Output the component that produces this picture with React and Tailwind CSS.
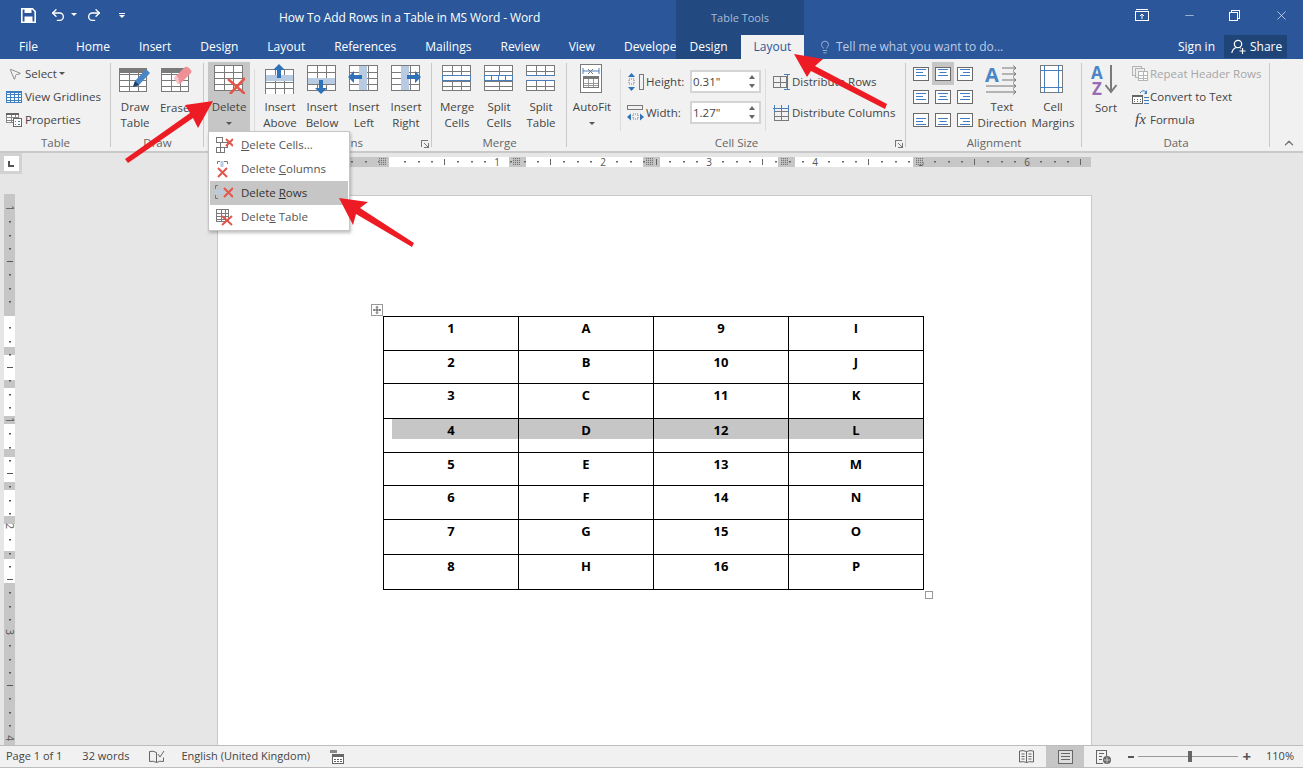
import React from 'react';
import { Undo2, Redo2, Lightbulb, X, Minus, MousePointer2, ChevronUp } from 'lucide-react';

const G = '#7a7a7a';
const B = '#4a7ebb';
const L = '#b9cbe3';
const R = '#e2574c';

const Grid = ({ x = 0.5, y = 0.5, w = 28, h = 24, rows = 4, cols = 4, c = G }) => (
  <g stroke={c} fill="none" shapeRendering="crispEdges">
    <rect x={x} y={y} width={w} height={h} fill="#fff" />
    {Array.from({ length: rows - 1 }, (_, i) => (
      <line key={'r' + i} x1={x} x2={x + w} y1={Math.round(y + (h * (i + 1)) / rows) + 0.5} y2={Math.round(y + (h * (i + 1)) / rows) + 0.5} />
    ))}
    {Array.from({ length: cols - 1 }, (_, i) => (
      <line key={'c' + i} y1={y} y2={y + h} x1={Math.round(x + (w * (i + 1)) / cols) + 0.5} x2={Math.round(x + (w * (i + 1)) / cols) + 0.5} />
    ))}
  </g>
);

const DrawIco = () => (
  <svg width="32" height="30" className="block">
    <Grid y={4.5} w={27} h={23} rows={4} cols={3} />
    <rect x="0" y="4" width="28" height="5" fill="#7a7a7a" />
    <path d="M14 23l2-6L27 5l4 4-11 12z" fill="#4a86c5" />
    <path d="M14 23l2-6 4 4z" fill="#1f3f66" />
  </svg>
);
const EraserIco = () => (
  <svg width="32" height="30" className="block">
    <Grid y={4.5} w={27} h={23} rows={4} cols={3} />
    <rect x="0" y="4" width="28" height="5" fill="#7a7a7a" />
    <path d="M13 14L24 3q2-1 4 1l2 2q1 2 0 3L19 20h-2z" fill="#ef8f96" />
    <path d="M13 14l4 6h2l-2-7-2-1z" fill="#f7c3c6" />
  </svg>
);
const DeleteIco = () => (
  <svg width="32" height="30" className="block">
    <Grid x={1.5} y={1.5} w={28} h={25} rows={4} cols={3} />
    <path d="M15 15l17 15M32 14L17 30" stroke={R} strokeWidth="2.6" fill="none" />
  </svg>
);
const InsAbove = () => (
  <svg width="32" height="30" className="block">
    <Grid x={1.5} y={5.5} w={28} h={25} rows={4} cols={3} />
    <rect x="2" y="11" width="27" height="6" fill={L} />
    <path d="M15 0l-6 6h4v8h4V6h4z" fill="#2f72b7" />
  </svg>
);
const InsBelow = () => (
  <svg width="32" height="30" className="block">
    <Grid x={1.5} y={1.5} w={28} h={25} rows={4} cols={3} />
    <rect x="2" y="14" width="27" height="6" fill={L} />
    <path d="M15 30l-6-6h4v-8h4v8h4z" fill="#2f72b7" />
  </svg>
);
const InsLeft = () => (
  <svg width="32" height="30" className="block">
    <Grid x={1.5} y={1.5} w={28} h={25} rows={4} cols={3} />
    <rect x="11" y="2" width="8" height="24" fill={L} />
    <path d="M0 13l6-6v4h8v4H6v4z" fill="#2f72b7" />
  </svg>
);
const InsRight = () => (
  <svg width="32" height="30" className="block">
    <Grid x={1.5} y={1.5} w={28} h={25} rows={4} cols={3} />
    <rect x="11" y="2" width="8" height="24" fill={L} />
    <path d="M31 13l-6-6v4h-8v4h8v4z" fill="#2f72b7" />
  </svg>
);
const MergeIco = () => (
  <svg width="30" height="28" className="block">
    <Grid x={0.5} y={1.5} w={28} h={25} rows={5} cols={3} />
    <rect x="0.5" y="11.5" width="28" height="5" fill="#fff" stroke={B} shapeRendering="crispEdges" />
  </svg>
);
const SplitCells = () => (
  <svg width="30" height="28" className="block">
    <Grid x={0.5} y={1.5} w={28} h={25} rows={5} cols={2} />
    <rect x="0.5" y="11.5" width="28" height="5" fill="#fff" stroke={B} shapeRendering="crispEdges" />
    <path d="M7.5 12v4M14.5 12v4M21.5 12v4" stroke={B} shapeRendering="crispEdges" />
  </svg>
);
const SplitTable = () => (
  <svg width="30" height="28" className="block">
    <Grid x={0.5} y={1.5} w={28} h={10} rows={2} cols={3} />
    <Grid x={0.5} y={16.5} w={28} h={10} rows={2} cols={3} />
    <path d="M0 11.5h29M0 16.5h29" stroke={B} shapeRendering="crispEdges" />
  </svg>
);
const AutoFitIco = () => (
  <svg width="24" height="30" className="block">
    <rect x="0.5" y="0.5" width="21" height="28" fill="#fff" stroke={G} shapeRendering="crispEdges" />
    <path d="M3 7h16M3 4v6M19 4v6" stroke={B} fill="none" />
    <path d="M8 5l5 5M13 5l-5 5" stroke="#777" />
    <rect x="3.5" y="12.5" width="15" height="11" fill="#fff" stroke="#777" shapeRendering="crispEdges" />
    <rect x="3" y="12" width="16" height="3" fill="#777" />
    <path d="M4 19h14M4 21.5h14M8.5 15v8M13.5 15v8" stroke="#999" shapeRendering="crispEdges" />
  </svg>
);
const HeightIco = () => (
  <svg width="17" height="18" className="block">
    <rect x="12.5" y="1.5" width="4" height="15" fill="none" stroke={G} shapeRendering="crispEdges" />
    <path d="M4.5 0L1 4h7zM4.5 18L1 14h7z" fill="#2f72b7" />
    <rect x="2" y="6" width="5" height="5" fill="none" stroke={G} strokeDasharray="1 1" />
  </svg>
);
const WidthIco = () => (
  <svg width="17" height="18" className="block">
    <rect x="0.5" y="1.5" width="15" height="4" fill="none" stroke={G} shapeRendering="crispEdges" />
    <path d="M0 13l4-3.5v7zM17 13l-4-3.5v7z" fill="#2f72b7" />
    <rect x="6" y="10" width="5" height="5" fill="none" stroke={G} strokeDasharray="1 1" />
  </svg>
);
const DistRows = () => (
  <svg width="17" height="16" className="block">
    <rect x="0.5" y="2.5" width="13" height="11" fill="none" stroke={G} shapeRendering="crispEdges" />
    <path d="M7.5 3v10M1 8.5h13" stroke={G} shapeRendering="crispEdges" />
    <path d="M11 0.5h6M11 15.5h6M14.5 0v16" stroke={B} shapeRendering="crispEdges" />
  </svg>
);
const DistCols = () => (
  <svg width="17" height="16" className="block">
    <rect x="1.5" y="6.5" width="14" height="9" fill="none" stroke={G} shapeRendering="crispEdges" />
    <path d="M8.5 7v8M2 11.5h13" stroke={G} shapeRendering="crispEdges" />
    <path d="M0 3.5h16M1.5 0v7M8.5 0v7M15.5 0v7" stroke={B} shapeRendering="crispEdges" />
  </svg>
);
const AlignIco = ({ a, v }) => {
  const ys = v === 0 ? [2, 5, 8] : v === 1 ? [3, 6, 9] : [5, 8, 11];
  const rows = [10, 7, 10];
  return (
    <svg width="16" height="14" className="block">
      <rect x="0.5" y="0.5" width="15" height="13" fill="#fff" stroke="#6a6a6a" shapeRendering="crispEdges" />
      {ys.map((y, i) => {
        const w = rows[i];
        const x = a === 0 ? 3 : a === 1 ? 8 - w / 2 : 13 - w;
        return <rect key={i} x={x} y={y} width={w} height="1" fill="#3f7fc1" />;
      })}
    </svg>
  );
};
const TextDir = () => (
  <svg width="34" height="34" className="block">
    <text x="0" y="18" fontFamily="Open Sans" fontWeight="700" fontSize="20" fill="#4a86c5">A</text>
    <g stroke="#777" fill="none">
      <path d="M17 4h14M28 1.5l3 2.5-3 2.5M17 10h14M28 7.5l3 2.5-3 2.5M17 16h14M28 13.5l3 2.5-3 2.5M1 22h30M28 19.5l3 2.5-3 2.5M1 28h30M28 25.5l3 2.5-3 2.5" />
    </g>
  </svg>
);
const CellMargins = () => (
  <svg width="26" height="30" className="block">
    <rect x="0.5" y="1.5" width="22" height="27" fill="#fff" stroke={G} shapeRendering="crispEdges" />
    <path d="M0 6.5h23M0 23.5h23M4.5 1v28M18.5 1v28" stroke={B} shapeRendering="crispEdges" />
  </svg>
);
const SortIco = () => (
  <svg width="30" height="32" className="block">
    <text x="0" y="15" fontFamily="Open Sans" fontWeight="700" fontSize="17" fill="#4a86c5">A</text>
    <text x="1" y="31" fontFamily="Open Sans" fontWeight="700" fontSize="17" fill="#9a6bb5">Z</text>
    <path d="M20 1v26M14.5 21l5.5 7 5.5-7" stroke="#7a7a7a" strokeWidth="2" fill="none" />
  </svg>
);
const SelectIco = () => <MousePointer2 size={14} strokeWidth={1.2} color="#666" />;
const GridlinesIco = () => (
  <svg width="17" height="14" className="block">
    <Grid x={0.5} y={1.5} w={15} h={11} rows={4} cols={4} c="#3f7fc1" />
    <rect x="0" y="1" width="16" height="2" fill="#3f7fc1" />
  </svg>
);
const PropsIco = () => (
  <svg width="17" height="15" className="block">
    <Grid x={0.5} y={1.5} w={12} h={9} rows={3} cols={3} c="#888" />
    <rect x="0" y="1" width="13" height="2" fill="#666" />
    <rect x="7.5" y="6.5" width="8" height="8" fill="#fff" stroke="#666" shapeRendering="crispEdges" />
    <path d="M9 9h1M12 9h2M9 12h1M12 12h2" stroke="#4a7ebb" shapeRendering="crispEdges" />
  </svg>
);
const RepeatIco = () => (
  <svg width="17" height="16" className="block">
    <rect x="0.5" y="0.5" width="9" height="9" fill="#eee" stroke="#b5b5b5" shapeRendering="crispEdges" />
    <rect x="3.5" y="2.5" width="9" height="9" fill="#eee" stroke="#b5b5b5" shapeRendering="crispEdges" />
    <Grid x={6.5} y={5.5} w={9} h={9} rows={3} cols={2} c="#b5b5b5" />
  </svg>
);
const ConvertIco = () => (
  <svg width="17" height="16" className="block">
    <path d="M8 4q3-4 6-1" stroke="#3f7fc1" fill="none" />
    <path d="M15 1v4h-3z" fill="#3f7fc1" />
    <rect x="0.5" y="6.5" width="10" height="8" fill="#fff" stroke="#666" shapeRendering="crispEdges" />
    <rect x="0" y="6" width="11" height="2" fill="#666" />
    <path d="M2 10.5h1M5 10.5h1M8 10.5h1M2 12.5h1M5 12.5h1M8 12.5h1" stroke="#666" shapeRendering="crispEdges" />
    <path d="M12 8.5h5M12 11.5h5M12 14.5h5" stroke="#3f7fc1" shapeRendering="crispEdges" />
  </svg>
);

const Small = ({ icon, children, muted, w = 'w-[19px]' }) => (
  <div className={`h-[23px] flex items-center whitespace-nowrap ${muted ? 'text-[#a6a6a6]' : ''}`}>
    <span className={`${w} flex justify-center shrink-0`}>{icon}</span>
    {children}
  </div>
);

const Caret = () => <span className="block w-0 h-0 border-x-[3px] border-x-transparent border-t-[3px] border-t-[#555]" />;

const Big = ({ w = 'w-[42px]', icon, l1, l2, caret, active }) => (
  <div className={`${w} mt-[3px] h-[69px] pt-[2px] flex flex-col items-center shrink-0 ${active ? 'bg-[#c6c6c6]' : ''}`}>
    <div className="h-[36px] flex items-start justify-center">{icon}</div>
    <div className="h-[16px] leading-[16px] whitespace-nowrap">{l1}</div>
    {l2 && <div className="h-[16px] leading-[16px] whitespace-nowrap">{l2}</div>}
    {caret && <div className="h-[16px] flex items-center"><Caret /></div>}
  </div>
);

const Launcher = () => (
  <svg width="8" height="8" className="absolute right-[3px] bottom-[3px]">
    <path d="M0.5 7V0.5H7M7.5 3v4.5H3M3 3l4 4" stroke="#777" fill="none" shapeRendering="crispEdges" />
  </svg>
);

const Group = ({ w, label, children, launcher, hideLabel }) => (
  <section className={`${w} shrink-0 h-full relative flex flex-col`}>
    <div className="h-[76px] flex">{children}</div>
    <div className="h-[16px] leading-[16px] text-center text-[#666]">{label}</div>
    {launcher && <Launcher />}
    <span className="absolute right-0 top-[4px] bottom-[4px] w-px bg-[#c9c9c9]" />
  </section>
);

const VSep = () => <span className="w-px h-[62px] mt-[10px] bg-[#dcdcdc] shrink-0" />;

const SpinField = ({ value }) => (
  <div className="w-[71px] h-[23px] border-2 border-[#d4d4d4] bg-white flex items-center justify-between pl-[1px] pr-[4px] ml-auto">
    <span className="leading-none">{value}</span>
    <span className="flex flex-col gap-[5px]">
      <span className="block w-0 h-0 border-x-[3px] border-x-transparent border-b-[4px] border-b-[#666]" />
      <span className="block w-0 h-0 border-x-[3px] border-x-transparent border-t-[4px] border-t-[#666]" />
    </span>
  </div>
);

const Tab = ({ ml, children }) => <span className={`${ml} whitespace-nowrap`}>{children}</span>;

const TitleBar = () => (
  <header className="h-[35px] bg-[#2b579a] flex text-white relative">
    <div className="w-[676px] flex items-start shrink-0">
      <svg width="15" height="15" className="block mt-[8px] ml-[21px]" viewBox="0 0 15 15">
        <path d="M0.8 0.8h10.7l2.7 2.7v10.7H0.8z" fill="none" stroke="#fff" strokeWidth="1.6" />
        <rect x="3.5" y="1" width="7" height="4" fill="#fff" />
        <rect x="3.5" y="8.5" width="8" height="6" fill="#fff" />
      </svg>
      <Undo2 size={16} strokeWidth={2} className="mt-[7px] ml-[14px]" />
      <span className="mt-[13px] ml-[5px] w-0 h-0 border-x-[3px] border-x-transparent border-t-[3px] border-t-white" />
      <Redo2 size={16} strokeWidth={2} className="mt-[7px] ml-[9px]" />
      <span className="mt-[13px] ml-[17px] flex flex-col items-center gap-[1px]">
        <span className="block w-[6px] h-px bg-white" />
        <span className="block w-0 h-0 border-x-[3px] border-x-transparent border-t-[3px] border-t-white" />
      </span>
      <span className="ml-[154px] mt-[9px] text-[12px] leading-[17px] whitespace-nowrap tracking-[-0.1px]">How To Add Rows in a Table in MS Word - Word</span>
    </div>
    <div className="w-[128px] bg-[#234a80] shrink-0 text-center text-[#a9bcd9] text-[11px] pt-[10px] leading-[16px]">Table Tools</div>
    <div className="flex items-start">
      <svg width="14" height="12" className="block mt-[9px] ml-[331px]">
        <path d="M0.5 2.5h13v9H0.5zM1 0.5h12" stroke="#fff" fill="none" shapeRendering="crispEdges" />
        <path d="M7 10V5M5 7l2-2 2 2" stroke="#fff" fill="none" />
      </svg>
      <Minus size={13} strokeWidth={1} className="mt-[9px] ml-[34px]" />
      <svg width="11" height="11" className="block mt-[10px] ml-[33px]">
        <path d="M0.5 2.5h8v8h-8zM2.5 2V0.5h8v8H9" stroke="#fff" fill="none" shapeRendering="crispEdges" />
      </svg>
      <X size={15} strokeWidth={1} className="mt-[8px] ml-[34px]" />
    </div>
  </header>
);

const Tabs = () => (
  <nav className="h-[24px] bg-[#2b579a] flex text-white text-[12px] leading-[24px] relative">
    <Tab ml="ml-[19px]">File</Tab>
    <Tab ml="ml-[38px]">Home</Tab>
    <Tab ml="ml-[29px]">Insert</Tab>
    <Tab ml="ml-[29px]">Design</Tab>
    <Tab ml="ml-[29px]">Layout</Tab>
    <Tab ml="ml-[29px]">References</Tab>
    <Tab ml="ml-[29px]">Mailings</Tab>
    <Tab ml="ml-[29px]">Review</Tab>
    <Tab ml="ml-[29px]">View</Tab>
    <Tab ml="ml-[29px]">Developer</Tab>
    <div className="absolute left-[676px] top-0 h-full w-[65px] bg-[#234a80] text-center">Design</div>
    <div className="absolute left-[741px] top-0 h-full w-[63px] bg-[#f1f1f1] text-[#2b579a] text-center">Layout</div>
    <div className="absolute left-[818px] top-0 h-full flex items-center text-[#bccbe3]">
      <Lightbulb size={14} strokeWidth={1.3} />
      <span className="ml-[4px] whitespace-nowrap">Tell me what you want to do...</span>
    </div>
    <div className="absolute left-[1178px] top-0 h-full whitespace-nowrap">Sign in</div>
    <div className="absolute left-[1224px] top-0 h-[23px] w-[63px] bg-[#1f4478] flex items-center pl-[7px] leading-none">
      <svg width="16" height="15" className="block mr-[3px]">
        <circle cx="7" cy="5" r="3.7" fill="none" stroke="#fff" strokeWidth="1.2" />
        <path d="M0.8 14q1-5 5-5.5M9 9h1M11.5 9v6M8.5 12h6" fill="none" stroke="#fff" strokeWidth="1.2" />
      </svg>
      Share
    </div>
  </nav>
);

const Ribbon = () => (
  <div className="h-[94px] bg-[#f1f1f1] border-b-2 border-[#c9c9c9] flex text-[11.5px] text-[#444] relative">
    <Group w="w-[111px]" label="Table">
      <div className="flex flex-col mt-[3px] pl-[6px]">
        <Small w="w-[17px]" icon={<SelectIco />}>
          <span className="ml-[2px]">Select</span><span className="ml-[2px]"><Caret /></span>
        </Small>
        <Small w="w-[17px]" icon={<GridlinesIco />}><span className="ml-[2px]">View Gridlines</span></Small>
        <Small w="w-[17px]" icon={<PropsIco />}><span className="ml-[2px]">Properties</span></Small>
      </div>
    </Group>
    <Group w="w-[93px]" label="Draw">
      <div className="w-[3px]" />
      <Big icon={<DrawIco />} l1="Draw" l2="Table" />
      <Big icon={<EraserIco />} l1="Eraser" />
    </Group>
    <Group w="w-[228px]" label="Rows & Columns" launcher>
      <div className="w-[4px]" />
      <Big active icon={<DeleteIco />} l1="Delete" caret />
      <div className="w-[4px]" />
      <VSep />
      <div className="w-[4px]" />
      <Big icon={<InsAbove />} l1="Insert" l2="Above" />
      <Big icon={<InsBelow />} l1="Insert" l2="Below" />
      <Big icon={<InsLeft />} l1="Insert" l2="Left" />
      <Big icon={<InsRight />} l1="Insert" l2="Right" />
    </Group>
    <Group w="w-[135px]" label="Merge">
      <div className="w-[4px]" />
      <Big icon={<MergeIco />} l1="Merge" l2="Cells" />
      <Big icon={<SplitCells />} l1="Split" l2="Cells" />
      <Big icon={<SplitTable />} l1="Split" l2="Table" />
    </Group>
    <Group w="w-[339px]" label="Cell Size" launcher>
      <div className="w-[4px]" />
      <Big icon={<AutoFitIco />} l1="AutoFit" caret />
      <div className="w-[7px]" />
      <VSep />
      <div className="w-[6px]" />
      <div className="w-[134px] flex flex-col mt-[11px] gap-[8px]">
        <div className="flex items-center h-[23px]"><HeightIco /><span className="ml-[2px]">Height:</span><SpinField value={'0.31"'} /></div>
        <div className="flex items-center h-[23px]"><WidthIco /><span className="ml-[2px]">Width:</span><SpinField value={'1.27"'} /></div>
      </div>
      <div className="w-[4px]" />
      <VSep />
      <div className="w-[7px]" />
      <div className="flex flex-col mt-[11px] gap-[8px]">
        <div className="flex items-center h-[23px] whitespace-nowrap"><DistRows /><span className="ml-[2px]">Distribute Rows</span></div>
        <div className="flex items-center h-[23px] whitespace-nowrap"><DistCols /><span className="ml-[2px]">Distribute Columns</span></div>
      </div>
    </Group>
    <Group w="w-[176px]" label="Alignment">
      <div className="w-[4px]" />
      <div className="mt-[3px] grid grid-cols-[22px_22px_22px] grid-rows-[23px_23px_23px] h-[69px] shrink-0">
        {[0, 1, 2].flatMap((v) =>
          [0, 1, 2].map((a) => (
            <div key={`${v}${a}`} className={`flex items-center justify-center ${v === 0 && a === 1 ? 'bg-[#c6c6c6]' : ''}`}>
              <AlignIco a={a} v={v} />
            </div>
          ))
        )}
      </div>
      <Big w="w-[52px]" icon={<TextDir />} l1="Text" l2="Direction" />
      <Big w="w-[50px]" icon={<CellMargins />} l1="Cell" l2="Margins" />
    </Group>
    <Group w="w-[188px]" label="Data">
      <div className="w-[6px]" />
      <Big w="w-[36px]" icon={<SortIco />} l1="Sort" />
      <div className="w-[7px]" />
      <div className="flex flex-col mt-[3px]">
        <Small muted icon={<RepeatIco />}>Repeat Header Rows</Small>
        <Small icon={<ConvertIco />}>Convert to Text</Small>
        <Small icon={<span className="font-['Liberation_Serif',serif] italic text-[15px] leading-none text-[#444]">fx</span>}>Formula</Small>
      </div>
    </Group>
    <div className="flex-1 flex items-end justify-center pb-[1px] pl-[4px]">
      <ChevronUp size={14} strokeWidth={2.4} color="#777" />
    </div>
  </div>
);

const hTicks = [];
for (let i = -13; i <= 52; i++) hTicks.push(i);

const HRuler = () => (
  <div className="relative ml-[195px] w-[874px] h-[10px] mt-[4px] flex">
    <span className="w-[172px] bg-[#c6c6c6]" />
    <span className="w-[120px] bg-white" />
    <span className="w-[17px] bg-[#c6c6c6]" />
    <span className="w-[117px] bg-white" />
    <span className="w-[17px] bg-[#c6c6c6]" />
    <span className="w-[118px] bg-white" />
    <span className="w-[17px] bg-[#c6c6c6]" />
    <span className="w-[118px] bg-white" />
    <span className="flex-1 bg-[#c6c6c6]" />
    <svg width="874" height="10" className="absolute left-0 top-0">
      {hTicks.map((i) => {
        const x = Math.round(174 + 13.25 * i);
        if (x < 0 || x > 872) return null;
        if (i % 8 === 0) {
          if (i === 0) return null;
          return (
            <text key={i} x={x} y="9" textAnchor="middle" fontSize="10" fontFamily="Open Sans" fill="#555">{Math.abs(i / 8)}</text>
          );
        }
        if (i % 4 === 0) return <rect key={i} x={x} y="2" width="1" height="6" fill="#666" />;
        return <rect key={i} x={x} y="4" width="2" height="1.5" fill="#666" />;
      })}
      {[162, 296, 429, 564, 699].map((x) => (
        <g key={x}>
          <rect x={x} y="1" width="7" height="7" fill="#777" />
          <path d={`M${x + 1.5} 1v7M${x + 3.5} 1v7M${x + 5.5} 1v7M${x} 2.5h7M${x} 4.5h7M${x} 6.5h7`} stroke="#c6c6c6" strokeWidth="0.8" />
        </g>
      ))}
    </svg>
  </div>
);

const VSeg = ({ h, gray }) => <span className={`${h} block ${gray ? 'bg-[#c6c6c6]' : 'bg-white'}`} />;

const VRuler = () => (
  <div className="relative w-[11px] h-[551px] flex flex-col ml-[4px] shrink-0">
    <VSeg h="h-[122px]" gray />
    <VSeg h="h-[31px]" />
    <VSeg h="h-[8px]" gray />
    <VSeg h="h-[25px]" />
    <VSeg h="h-[8px]" gray />
    <VSeg h="h-[28px]" />
    <VSeg h="h-[8px]" gray />
    <VSeg h="h-[25px]" />
    <VSeg h="h-[8px]" gray />
    <VSeg h="h-[25px]" />
    <VSeg h="h-[8px]" gray />
    <VSeg h="h-[26px]" />
    <VSeg h="h-[8px]" gray />
    <VSeg h="h-[27px]" />
    <VSeg h="h-[8px]" gray />
    <VSeg h="h-[24px]" />
    <span className="flex-1 bg-[#c6c6c6] block" />
    <svg width="11" height="551" className="absolute left-0 top-0">
      {Array.from({ length: 42 }, (_, k) => k - 8).map((i) => {
        const y = Math.round(120 + 13.25 * i);
        if (y < 0 || y > 550) return null;
        if (i === 0) return null;
        if (i % 8 === 0) {
          return (
            <text key={i} x="5.5" y={y} textAnchor="middle" fontSize="10" fontFamily="Open Sans" fill="#555" transform={`rotate(90 5.5 ${y}) translate(0 3.5)`}>{Math.abs(i / 8)}</text>
          );
        }
        if (i % 4 === 0) return <rect key={i} x="3" y={y} width="6" height="1" fill="#555" />;
        return <rect key={i} x="5" y={y} width="2" height="1.5" fill="#555" />;
      })}
    </svg>
  </div>
);

const rows = [
  ['h-[34px]', '1', 'A', '9', 'I'],
  ['h-[33px]', '2', 'B', '10', 'J'],
  ['h-[35px]', '3', 'C', '11', 'K'],
  ['h-[34px]', '4', 'D', '12', 'L'],
  ['h-[33px]', '5', 'E', '13', 'M'],
  ['h-[34px]', '6', 'F', '14', 'N'],
  ['h-[35px]', '7', 'G', '15', 'O'],
  ['h-[35px]', '8', 'H', '16', 'P'],
];

const WordTable = () => (
  <div className="relative w-[541px] border-t border-l border-black font-bold text-[13px] text-black">
    {rows.map(([h, ...cells], r) => (
      <div key={r} className={`${h} flex relative`}>
        {r === 3 && <span className="absolute left-[8px] right-0 top-[0px] h-[20px] bg-[#c6c6c6]" />}
        {cells.map((c, i) => (
          <div key={i} className="relative w-[135px] border-r border-b border-black text-center leading-[20px] pt-[1px]">{c}</div>
        ))}
      </div>
    ))}
    <svg width="12" height="12" className="absolute left-[-13px] top-[-13px]">
      <rect x="0.5" y="0.5" width="11" height="11" fill="#fff" stroke="#999" shapeRendering="crispEdges" />
      <path d="M6 2.5v7M2.5 6h7M5 3.5l1-1 1 1M5 8.5l1 1 1-1M3.5 5l-1 1 1 1M8.5 5l1 1-1 1" stroke="#333" fill="none" strokeWidth="0.8" />
    </svg>
    <span className="absolute right-[-9px] bottom-[-9px] w-[8px] h-[8px] border border-[#999] bg-white" />
  </div>
);

const Doc = () => (
  <main className="h-[592px] bg-[#e6e6e6] flex flex-col relative">
    <div className="h-[41px] flex shrink-0">
      <div className="w-[22px] h-[21px] bg-[#d2d2d2] flex items-center justify-center shrink-0">
        <div className="w-[15px] h-[15px] bg-white flex items-center justify-center">
          <span className="block w-[6px] h-[6px] border-l-2 border-b-2 border-[#555]" />
        </div>
      </div>
      <HRuler />
    </div>
    <div className="flex flex-1">
      <VRuler />
      <div className="ml-[202px] w-[875px] mt-[1px] bg-white border-x border-t border-[#c9c9c9] pt-[120px] pl-[165px]">
        <WordTable />
      </div>
    </div>
  </main>
);

const Status = () => (
  <footer className="h-[23px] bg-[#f1f1f1] border-y border-[#bdbdbd] flex items-center text-[11px] text-[#444] whitespace-nowrap relative">
    <span className="ml-[6px]">Page 1 of 1</span>
    <span className="ml-[20px]">32 words</span>
    <svg width="16" height="13" className="block ml-[20px]">
      <path d="M7.5 2.5Q4 0.5 0.5 1.5v10q4-1 7 1 3-2 7-1v-4M7.5 2.5v10" stroke="#666" fill="none" />
      <path d="M9 4l2 3 4-6" stroke="#666" fill="none" />
    </svg>
    <span className="ml-[16px]">English (United Kingdom)</span>
    <svg width="14" height="14" className="block ml-[20px]">
      <rect x="0" y="0" width="7" height="3" fill="#888" />
      <rect x="2.5" y="4.5" width="11" height="9" fill="#fff" stroke="#666" shapeRendering="crispEdges" />
      <rect x="2" y="4" width="12" height="3" fill="#666" />
      <path d="M4 9.5h2M7 9.5h2M10 9.5h2M4 11.5h2M7 11.5h2M10 11.5h2" stroke="#666" shapeRendering="crispEdges" />
    </svg>
    <div className="ml-auto flex items-center h-full">
      <svg width="15" height="13" className="block mr-[12px]">
        <path d="M7.5 1.5Q4 0 0.5 1v11q4-1 7 0.5 3-1.5 7-0.5V1q-3.5-1-7 0.5zM7.5 1.5v11M2.5 4h3M2.5 6.5h3M2.5 9h3M9.5 4h3M9.5 6.5h3M9.5 9h3" stroke="#666" fill="none" />
      </svg>
      <div className="w-[38px] h-full bg-[#c6c6c6] flex items-center justify-center">
        <svg width="15" height="14" className="block">
          <rect x="0.5" y="0.5" width="14" height="13" fill="#ddd" stroke="#666" shapeRendering="crispEdges" />
          <path d="M3 3.5h9M3 6.5h9M3 9.5h9" stroke="#666" shapeRendering="crispEdges" />
        </svg>
      </div>
      <svg width="15" height="14" className="block ml-[12px]">
        <path d="M10.5 6V0.5H0.5v13h6M3 3.5h5M3 6.5h3M3 9.5h3" stroke="#666" fill="none" shapeRendering="crispEdges" />
        <circle cx="11" cy="10" r="4" fill="#666" />
        <path d="M8 10h6M11 7v6" stroke="#f1f1f1" strokeWidth="0.7" />
      </svg>
      <span className="block w-[6px] h-[2px] bg-[#555] ml-[17px]" />
      <div className="relative w-[100px] h-px bg-[#999] ml-[4px]">
        <span className="absolute left-[50px] top-[-5px] w-[4px] h-[11px] bg-[#666]" />
      </div>
      <span className="ml-[4px] text-[15px] leading-none text-[#555] font-bold">+</span>
      <span className="ml-[15px] mr-[9px] text-[#444]">110%</span>
    </div>
  </footer>
);

const MenuIcon = ({ kind }) => (
  <svg width="18" height="18" className="block">
    {kind === 'cells' && (
      <g stroke="#777" fill="none" shapeRendering="crispEdges">
        <path d="M1.5 1.5h6v5h-6zM1.5 11.5h8v5h-8zM5.5 6.5h7v5h-7zM5.5 11.5v5" />
      </g>
    )}
    {kind === 'cols' && (
      <g>
        <path d="M2.5 4V1.5H5M9 1.5h3.5V4" stroke="#777" fill="none" />
        <rect x="5.5" y="1" width="3" height="6" fill={L} />
      </g>
    )}
    {kind === 'rows' && (
      <g>
        <path d="M3 1.5H0.5V5M0.5 11v3.5H3" stroke="#777" fill="none" />
        <rect x="1" y="6" width="7" height="4" fill={L} />
      </g>
    )}
    {kind === 'table' && <Grid x={1.5} y={1.5} w={12} h={12} rows={4} cols={3} />}
    <path
      d={
        kind === 'cells' ? 'M11 3l7 7M18 3l-7 7'
        : kind === 'cols' ? 'M3 8l9 9M12 8l-9 9'
        : kind === 'rows' ? 'M9 4l9 9M18 4l-9 9'
        : 'M7 8l10 9M17 8L7 17'
      }
      stroke={R}
      strokeWidth="2"
      fill="none"
    />
  </svg>
);

const MenuRow = ({ kind, hot, children }) => (
  <div className={`h-[24px] flex items-center pl-[5px] ${hot ? 'bg-[#c6c6c6] text-[#333]' : 'text-[#555]'}`}>
    <MenuIcon kind={kind} />
    <span className="ml-[8px] whitespace-nowrap">{children}</span>
  </div>
);

const Menu = () => (
  <div className="absolute left-[208px] top-[131px] w-[142px] h-[100px] bg-white border border-[#c6c6c6] shadow-[1px_2px_3px_rgba(0,0,0,0.25)] p-[1px] pt-[1px] text-[11.5px]">
    <MenuRow kind="cells"><u>D</u>elete Cells...</MenuRow>
    <MenuRow kind="cols">Delete <u>C</u>olumns</MenuRow>
    <MenuRow kind="rows" hot>Delete <u>R</u>ows</MenuRow>
    <MenuRow kind="table">Delet<u>e</u> Table</MenuRow>
  </div>
);

const Arrows = () => (
  <svg width="1303" height="768" className="absolute left-0 top-0 pointer-events-none">
    <g fill="#ed1c24">
      <polygon points="125,159 128,163 193,118 198,128 213,101 185,105 190,113" />
      <polygon points="339,198 368,202 360,208 414,243 412,247 356,214 353,225" />
      <polygon points="794,54 823,59 815,66 887,104 885,109 811,71 807,77" />
    </g>
  </svg>
);

export default function App() {
  return (
    <div className="relative w-[1303px] h-[768px] overflow-hidden flex flex-col font-['Open_Sans','Noto_Sans',sans-serif]">
      <TitleBar />
      <Tabs />
      <Ribbon />
      <Doc />
      <Status />
      <Menu />
      <Arrows />
    </div>
  );
}
